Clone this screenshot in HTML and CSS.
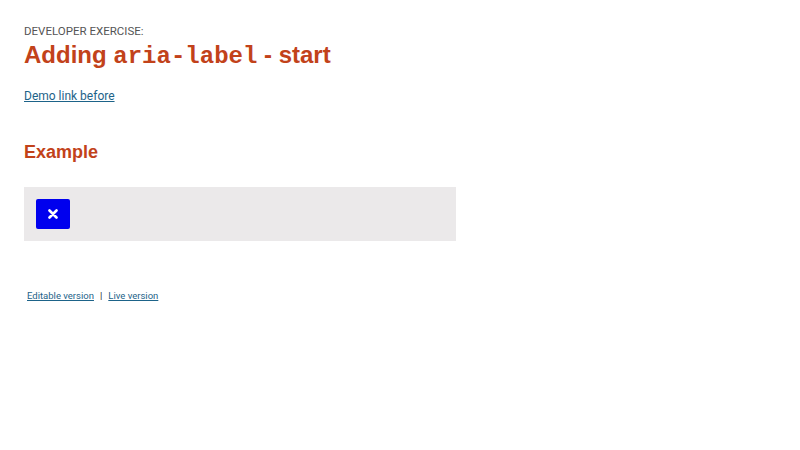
FILE: index.html
```html
<!DOCTYPE html>
<html lang="en">
<head>
  <meta charset="UTF-8">
  <title>Adding aria-label - start</title>
  <link rel="stylesheet" href="styles.css">
</head>
<body>
  <div class="page">
    <p class="kicker">DEVELOPER EXERCISE:</p>
    <h1>Adding <code>aria-label</code> - start</h1>
    <p class="demo"><a href="#">Demo link before</a></p>

    <h2>Example</h2>
    <div class="example">
      <button class="close-btn">
        <svg width="10" height="10" viewBox="0 0 10 10">
          <path d="M1.5 1.5 L8.5 8.5 M8.5 1.5 L1.5 8.5" stroke="#fff" stroke-width="2.6" stroke-linecap="round"/>
        </svg>
      </button>
    </div>

    <p class="footer"><a href="#">Editable version</a><span class="sep">|</span><a href="#">Live version</a></p>
  </div>
</body>
</html>
```

FILE: styles.css
```css
body {
  margin: 0;
  font-family: Roboto, "Liberation Sans", sans-serif;
  background: #fff;
}
.page {
  padding: 24px 24px;
}
.kicker {
  margin: 0;
  font-size: 11.5px;
  color: #555;
  line-height: 14px;
}
h1 {
  margin: 1px 0 0;
  font-family: "Liberation Sans", Arial, sans-serif;
  font-size: 24px;
  line-height: 32px;
  color: #c2421a;
}
h1 code {
  font-family: "Liberation Mono", monospace;
  font-size: 24px;
}
.demo {
  margin: 14px 0 0;
  font-size: 12px;
  line-height: 18px;
}
a {
  color: #1d6389;
}
h2 {
  margin: 36px 0 0;
  font-family: "Liberation Sans", Arial, sans-serif;
  font-size: 18px;
  line-height: 22px;
  color: #c2421a;
}
.example {
  width: 432px;
  height: 54px;
  box-sizing: border-box;
  margin-top: 24px;
  padding: 12px;
  background: #ebe9ea;
}
.close-btn {
  width: 34px;
  height: 30px;
  border: none;
  border-radius: 2px;
  background: #0000ee;
  padding: 0;
  display: flex;
  align-items: center;
  justify-content: center;
}
.footer {
  margin: 49px 0 0 3px;
  font-size: 9.5px;
  line-height: 12px;
}
.sep {
  margin: 0 6px;
  color: #222;
}
```
